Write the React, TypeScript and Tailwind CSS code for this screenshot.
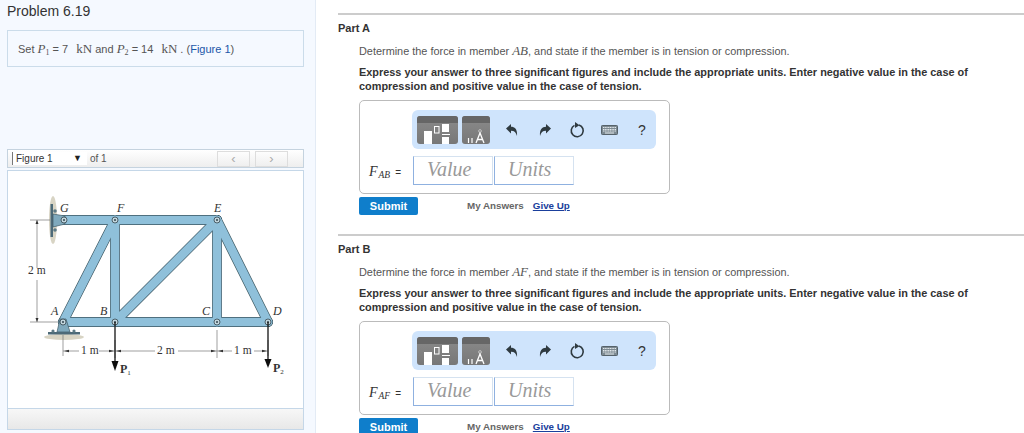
const sans = "font-['Liberation_Sans',Arial,sans-serif]";

function Truss() {
  const members = [
    "M64 220 L115 220",
    "M115 220 L217 220",
    "M63 322 L115 322",
    "M115 322 L217 322",
    "M217 322 L268 322",
    "M115 220 L115 322",
    "M217 220 L217 322",
    "M63 322 L115 220",
    "M115 322 L217 220",
    "M217 220 L268 322",
  ];
  const pins = [
    [64, 220],
    [115, 220],
    [217, 220],
    [63, 322],
    [115, 322],
    [217, 322],
    [268, 322],
  ];
  return (
    <svg viewBox="8 171 296 237" className="block h-[237px] w-[296px]">
      <defs>
        <filter id="soft">
          <feGaussianBlur stdDeviation="0.4" />
        </filter>
      </defs>
      <g filter="url(#soft)">
        <ellipse cx="53" cy="220" rx="4" ry="24" fill="#d8d4c4" />
        <ellipse cx="64" cy="337" rx="20" ry="3" fill="#d8d4c4" />
        {/* dimension lines */}
        <g stroke="#777" strokeWidth="0.7" fill="none">
          <path d="M30 220 H50 M30 322 H60 M37 220 V268 M37 280 V322" />
          <path d="M63 335 V356 M115 340 V358 M217 330 V358 M268 340 V356" />
          <path d="M63 351 H79 M99 351 H155 M178 351 H217 M217 351 H232 M254 351 H268" />
        </g>
        <path d="M37 220 l-1.5 4 h3 Z M37 322 l-1.5 -4 h3 Z" fill="#333" />
        <path d="M64 351 l5 -1.3 v2.6 Z M114 351 l-5 -1.3 v2.6 Z M116 351 l5 -1.3 v2.6 Z M216 351 l-5 -1.3 v2.6 Z M218 351 l5 -1.3 v2.6 Z M267 351 l-5 -1.3 v2.6 Z" fill="#333" />
        {/* members */}
        <g fill="none" strokeLinecap="round">
          {members.map((d) => (
            <path key={d} d={d} stroke="#3a5560" strokeWidth="9.8" />
          ))}
          {members.map((d) => (
            <path key={d + "f"} d={d} stroke="#8fc0da" strokeWidth="8.5" />
          ))}
        </g>
        {/* wall bracket at G */}
        <rect x="50.5" y="204" width="2.5" height="33" fill="#4d6b78" />
        <path d="M53 214 L65 216 V224 L53 227 Z" fill="#7fa9bd" stroke="#3f5a66" strokeWidth="0.7" />
        <circle cx="55" cy="211" r="1.8" fill="#5d7a86" />
        <circle cx="55" cy="230" r="1.8" fill="#5d7a86" />
        {/* support at A */}
        <path d="M57 332 L60 319 H66 L70 332 Z" fill="#7fa9bd" stroke="#3f5a66" strokeWidth="0.7" />
        <rect x="48" y="332" width="32" height="2.5" fill="#4d6b78" />
        <circle cx="53" cy="331" r="1.6" fill="#5d7a86" />
        <circle cx="74" cy="331" r="1.6" fill="#5d7a86" />
        {pins.map(([x, y]) => (
          <g key={`${x}-${y}`}>
            <circle cx={x} cy={y} r="3" fill="#c2d6de" stroke="#33454e" strokeWidth="0.8" />
            <circle cx={x} cy={y} r="1" fill="#33454e" />
          </g>
        ))}
        {/* loads */}
        <path d="M115 322 V364" stroke="#111" strokeWidth="1.3" />
        <path d="M111.5 361 H118.5 L115 371 Z" fill="#111" />
        <path d="M268 322 V361" stroke="#111" strokeWidth="1.3" />
        <path d="M264.5 359 H271.5 L268 368 Z" fill="#111" />
      </g>
      <g fontFamily="'Liberation Serif', serif" fill="#333">
        <g fontSize="12" fontStyle="italic">
          <text x="60" y="212">G</text>
          <text x="117" y="212">F</text>
          <text x="214" y="212">E</text>
          <text x="51" y="315">A</text>
          <text x="100" y="315">B</text>
          <text x="202" y="315">C</text>
          <text x="273" y="315">D</text>
        </g>
        <g fontSize="11.5">
          <text x="28" y="274">2 m</text>
          <text x="81" y="354">1 m</text>
          <text x="157" y="354">2 m</text>
          <text x="234" y="354">1 m</text>
        </g>
        <text x="120" y="373" fontSize="12" fontWeight="700">P<tspan fontSize="7" dy="2" fontWeight="400">1</tspan></text>
        <text x="273" y="372" fontSize="12" fontWeight="700">P<tspan fontSize="7" dy="2" fontWeight="400">2</tspan></text>
      </g>
    </svg>
  );
}

function TemplatesIcon() {
  return (
    <svg viewBox="0 0 41 28" className="h-[28px] w-[41px]">
      <defs>
        <linearGradient id="btnA" x1="0" y1="0" x2="0" y2="1">
          <stop offset="0" stopColor="#8b8b8b" />
          <stop offset="1" stopColor="#777" />
        </linearGradient>
      </defs>
      <rect width="41" height="28" rx="3" fill="url(#btnA)" />
      <path d="M0 7 V3 a3 3 0 0 1 3 -3 H38 a3 3 0 0 1 3 3 V7 Z" fill="#666" />
      <rect x="7" y="15" width="8" height="13" fill="#fff" />
      <rect x="17.5" y="10.5" width="4.5" height="6.5" fill="none" stroke="#fff" />
      <rect x="25" y="8" width="7" height="8" fill="#fff" />
      <rect x="25" y="18" width="8" height="1" fill="#fff" />
      <rect x="25" y="21" width="7" height="7" fill="#fff" />
    </svg>
  );
}

function UnitsIcon() {
  return (
    <svg viewBox="0 0 28 28" className="h-[28px] w-[28px]">
      <rect width="28" height="28" rx="3" fill="url(#btnA)" />
      <path d="M0 7 V3 a3 3 0 0 1 3 -3 H25 a3 3 0 0 1 3 3 V7 Z" fill="#666" />
      <circle cx="18" cy="15" r="1.4" fill="none" stroke="#ccc" strokeWidth="0.8" />
      <path d="M14 27 L18 17 L22 27 M15.5 23.5 H20.5" stroke="#fff" strokeWidth="1.3" fill="none" />
      <path d="M6.5 22 V27 M10 22 V27" stroke="#fff" strokeWidth="1.2" />
    </svg>
  );
}

function UndoIcon({ flip }: { flip?: boolean }) {
  return (
    <svg viewBox="0 0 14 14" className={`h-[14px] w-[14px] ${flip ? "-scale-x-100" : ""}`}>
      <path d="M1 5.5 L6 1 V3.8 C10 3.8 12.5 6.5 12 13 C11 9.5 9.5 7.8 6 7.8 V10.5 Z" fill="#2f3a40" />
    </svg>
  );
}

function ResetIcon() {
  return (
    <svg viewBox="0 0 16 16" className="h-[16px] w-[16px]">
      <path d="M5.5 3.4 A6 6 0 1 0 10 3" fill="none" stroke="#2f3a40" strokeWidth="1.6" />
      <path d="M6 0 L10.5 3.2 L6 6 Z" fill="#2f3a40" />
    </svg>
  );
}

function KeyboardIcon() {
  return (
    <svg viewBox="0 0 17 10" className="h-[10px] w-[17px]">
      <rect x="0.5" y="0.5" width="16" height="9" rx="0.8" fill="#7d8a92" stroke="#56626a" />
      <path d="M2 2.5 H15 M2 4.5 H15 M2 6 H15" stroke="#eef3f6" strokeWidth="0.9" strokeDasharray="1.2 0.5" />
      <path d="M4 8 H13" stroke="#eef3f6" strokeWidth="0.9" />
    </svg>
  );
}

function AnswerPart({ name, member, symbol }: { name: string; member: string; symbol: string }) {
  return (
    <section className="mb-[19px]">
      <div className="h-[2px] bg-[#cccccc]" />
      <h2 className="mt-[6px] text-[11px] leading-[14px] font-bold text-[#333]">{name}</h2>
      <div className="pl-[21px]">
        <p className="mt-[9px] text-[10.9px] leading-[14px] text-[#555]">
          Determine the force in member{" "}
          <i className="font-['Liberation_Serif',serif] text-[13px]">{member}</i>, and state if the member is in tension or compression.
        </p>
        <p className="mt-[7px] w-[625px] text-[10.9px] leading-[14px] font-bold text-[#333]">
          Express your answer to three significant figures and include the appropriate units. Enter negative value in the case of compression and positive value in the case of tension.
        </p>
        <div className="mt-[7px] h-[94px] w-[311px] rounded-[5px] border border-[#bbbbbb] pt-[9px] pl-[52px]">
          <div className="flex h-[39px] w-[244px] items-center rounded-[6px] bg-[#cfe4fc] pl-[5px]">
            <TemplatesIcon />
            <span className="ml-[4px]">
              <UnitsIcon />
            </span>
            <span className="ml-[15px]">
              <UndoIcon />
            </span>
            <span className="ml-[19px]">
              <UndoIcon flip />
            </span>
            <span className="ml-[17px]">
              <ResetIcon />
            </span>
            <span className="ml-[16px]">
              <KeyboardIcon />
            </span>
            <span className="ml-[20px] text-[14px] leading-none text-[#333]">?</span>
          </div>
          <div className="relative mt-[7px] ml-[1px] flex h-[29px]">
            <span className="absolute top-[5px] left-[-44px] font-['Liberation_Serif',serif] text-[14px] whitespace-nowrap text-[#333] italic">
              F<sub className="ml-[1px] text-[9.5px]">{symbol}</sub>
              <span className="ml-[5px] font-['Liberation_Sans',sans-serif] text-[10px] not-italic">=</span>
            </span>
            <div className="h-[29px] w-[80px] border border-[#d5e2f0] border-b-[#8fb1e0] border-l-[#8fb1e0] pl-[13px] font-['Liberation_Serif',serif] text-[20px] leading-[25px] text-[#999] italic">
              Value
            </div>
            <div className="ml-[1px] h-[29px] w-[80px] border border-[#d5e2f0] border-b-[#8fb1e0] border-l-[#8fb1e0] pl-[13px] font-['Liberation_Serif',serif] text-[20px] leading-[25px] text-[#999] italic">
              Units
            </div>
          </div>
        </div>
        <div className="mt-[3px] flex h-[18px] items-center">
          <button className="h-[18px] w-[59px] rounded-[2px] bg-[#0f7ecb] text-[11px] leading-none font-bold text-white">Submit</button>
          <span className="ml-[49px] text-[9.8px] font-bold text-[#666]">My Answers</span>
          <a className="ml-[9px] text-[9.8px] font-bold text-[#1a3f9c] underline">Give Up</a>
        </div>
      </div>
    </section>
  );
}

export default function App() {
  return (
    <div className={`flex h-[433px] w-[1024px] overflow-hidden bg-white ${sans}`}>
      <aside className="h-full w-[316px] shrink-0 border-r border-[#e3ebf5] bg-[#f5f9ff] pr-[11px] pl-[7px]">
        <h1 className="mt-[2px] text-[14px] leading-[18px] text-[#333]">Problem 6.19</h1>
        <div className="mt-[10px] flex h-[37px] items-center border border-[#cbdcea] pl-[10px] text-[11px] whitespace-nowrap text-[#555]">
          <span>
            Set <i className="font-['Liberation_Serif',serif] text-[13px]">P<sub className="text-[8px] not-italic">1</sub></i> = 7{" "}
            <span className="ml-[5px] font-['Liberation_Serif',serif] text-[13px]">kN</span> and{" "}
            <i className="font-['Liberation_Serif',serif] text-[13px]">P<sub className="text-[8px] not-italic">2</sub></i> = 14{" "}
            <span className="ml-[5px] font-['Liberation_Serif',serif] text-[13px]">kN</span> . (<a className="text-[#1c57a8]">Figure 1</a>)
          </span>
        </div>
        <div className="mt-[82px] flex h-[19px] items-center border border-[#c5d3df] bg-gradient-to-b from-white to-[#eeeeee] pl-[4px]">
          <div className="flex h-[13px] w-[75px] items-center justify-between border-l border-[#777] bg-white pr-[5px] pl-[3px] text-[10px] text-[#333]">
            Figure 1<span className="text-[9px] text-[#222]">▼</span>
          </div>
          <span className="ml-[3px] text-[10px] text-[#555]">of 1</span>
          <div className="ml-auto flex pr-[15px]">
            <div className="flex h-[16px] w-[33px] items-center justify-center border border-[#dddddd] text-[13px] text-[#aaa]">‹</div>
            <div className="ml-[5px] flex h-[16px] w-[33px] items-center justify-center border border-[#dddddd] text-[13px] text-[#aaa]">›</div>
          </div>
        </div>
        <div className="mt-[2px] border border-[#c5d7e8]">
          <div className="bg-white">
            <Truss />
          </div>
          <div className="h-[21px] border-t border-[#c5d7e8] bg-gradient-to-b from-[#f7f7f7] to-[#e8e8e8]" />
        </div>
      </aside>
      <main className="min-w-0 flex-1 pt-[13px] pl-[22px]">
        <AnswerPart name="Part A" member="AB" symbol="AB" />
        <AnswerPart name="Part B" member="AF" symbol="AF" />
      </main>
    </div>
  );
}
